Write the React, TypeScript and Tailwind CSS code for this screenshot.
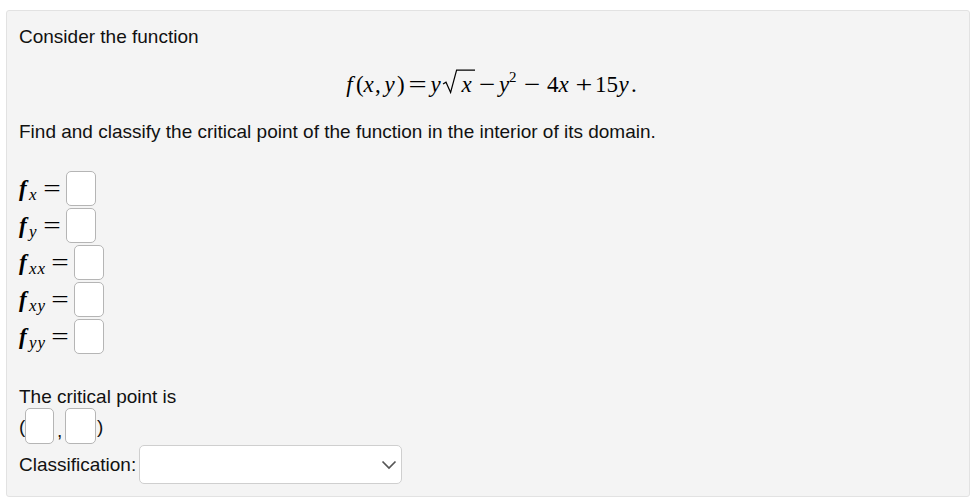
import React from 'react';

const serif = { fontFamily: '"Liberation Serif", "DejaVu Serif", serif' };

const Box: React.FC<{ className?: string }> = ({ className = 'w-[30px] h-[35px]' }) => (
  <div className={`bg-white border border-[#b5b5b5] rounded-[5px] shrink-0 ${className}`} />
);

const Partial: React.FC<{ sub: string }> = ({ sub }) => (
  <span className="flex items-baseline leading-none text-black" style={serif}>
    <i className="text-[23px] font-bold inline-block w-[10px]">f</i>
    <i className="text-[17px] tracking-[1px] translate-y-[4px]">{sub}</i>
    <span className="text-[23px] inline-block w-[18px] text-center ml-[5px] mr-[5px] scale-x-[1.35]">=</span>
  </span>
);

const App: React.FC = () => {
  const rows = ['x', 'y', 'xx', 'xy', 'yy'];

  return (
    <div className="w-[978px] h-[504px] bg-white pt-[10px] pl-[6px]" style={{ fontFamily: '"Liberation Sans", Arial, sans-serif' }}>
      <div className="w-[964px] h-[487px] bg-[#f4f4f4] border border-[#e2e2e2] rounded-[3px] pl-[12px] pt-[14px] text-[19px] text-[#111]">
        <p className="leading-[24px]">Consider the function</p>

        {/* formula */}
        <div className="h-[34px] mt-[18px] flex items-center text-[23px] leading-none text-black" style={serif}>
          <span className="flex items-baseline ml-[324px]">
            <i className="inline-block w-[13px] text-center">f</i>
            <span className="inline-block w-[6px]">(</span>
            <i className="inline-block w-[13px] text-center">x</i>
            <span className="inline-block w-[7px]">,</span>
            <i className="inline-block w-[15px] text-center">y</i>
            <span className="inline-block w-[7px]">)</span>
            <span className="inline-block w-[19px] ml-[4px] text-center scale-x-[1.4]">=</span>
            <i className="inline-block w-[13px] ml-[2px] text-center">y</i>
            <span className="relative inline-block w-[33px] pl-[16px]">
              <svg className="absolute left-0 top-[-4px]" width="33" height="26" viewBox="0 0 33 26" fill="none">
                <path d="M1 15 L4 13.2 L8.6 23.5 L14.6 1.2 L33 1.2" stroke="#000" strokeWidth="1.2" strokeLinejoin="miter" />
              </svg>
              <i className="inline-block w-[17px] text-center">x</i>
            </span>
            <span className="inline-block w-[16px] ml-[4px] text-center scale-x-[1.25]">−</span>
            <i className="inline-block w-[10px] ml-[4px] text-center">y</i>
            <span className="inline-block w-[7px] text-[15px] -translate-y-[10px]">2</span>
            <span className="inline-block w-[16px] ml-[8px] text-center scale-x-[1.25]">−</span>
            <span className="inline-block w-[10px] ml-[7px]">4</span>
            <i className="inline-block w-[13px] text-center">x</i>
            <span className="inline-block w-[18px] ml-[5px] text-center scale-x-[1.3]">+</span>
            <span className="inline-block w-[21px] ml-[2px] text-center">15</span>
            <i className="inline-block w-[15px] text-center">y</i>
            <span className="inline-block w-[5px]">.</span>
          </span>
        </div>

        <p className="leading-[24px] mt-[19px]">Find and classify the critical point of the function in the interior of its domain.</p>

        <div className="mt-[27px] flex flex-col gap-[2px]">
          {rows.map((r) => (
            <div key={r} className="flex items-center h-[35px]">
              <Partial sub={r} />
              <Box />
            </div>
          ))}
        </div>

        <p className="leading-[24px] mt-[31px]">The critical point is</p>
        <div className="flex items-center mt-[-1px]">
          <span className="leading-none inline-block w-[6px]">(</span>
          <Box className="w-[29px] h-[36px]" />
          <span className="leading-none mx-[3px] mt-[8px] inline-block w-[5px]">,</span>
          <Box className="w-[31px] h-[36px]" />
          <span className="leading-none ml-[1px]">)</span>
        </div>
        <div className="flex items-center mt-[1px]">
          <span className="leading-[24px] mr-[3px]">Classification:</span>
          <div className="w-[263px] h-[39px] bg-white border border-[#cfcfcf] rounded-[5px] flex items-center justify-end pr-[4px]">
            <svg width="16" height="10" viewBox="0 0 16 10" fill="none">
              <path d="M1.5 1.5 L8 8 L14.5 1.5" stroke="#555" strokeWidth="1.7" />
            </svg>
          </div>
        </div>
      </div>
    </div>
  );
};

export default App;
